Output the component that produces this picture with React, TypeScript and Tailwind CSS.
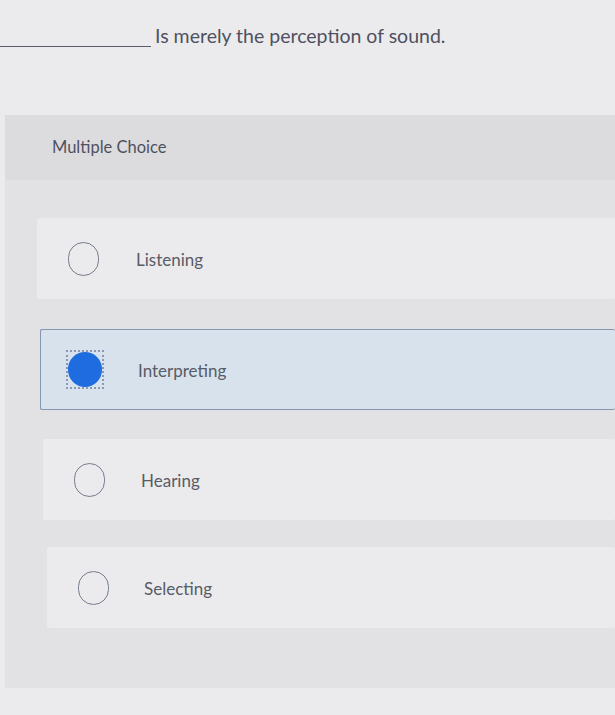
import React from "react";

const font = { fontFamily: "Lato, 'Open Sans', Arial, sans-serif" };

function Radio({ selected }: { selected?: boolean }) {
  if (selected) {
    return (
      <div className="w-[38px] h-[39px] border-[2px] border-dotted border-[#8a98b4] flex items-center justify-center shrink-0">
        <div className="w-[34px] h-[35px] rounded-full bg-[#1f6be0]" />
      </div>
    );
  }
  return <div className="w-[31px] h-[34px] rounded-full border-[1.5px] border-[#767c8e] shrink-0" />;
}

function Option({
  label,
  selected,
  ml,
  radioPl,
  textGap,
}: {
  label: string;
  selected?: boolean;
  ml: string;
  radioPl: string;
  textGap: string;
}) {
  return (
    <div
      className={
        "h-[81px] flex items-center rounded-[2px] " +
        ml +
        " " +
        (selected
          ? "bg-[#d7e2ec] border border-[#8596b3] border-r-0"
          : "bg-[#ebebed]")
      }
    >
      <div className={radioPl}>
        <Radio selected={selected} />
      </div>
      <div className={"text-[17px] text-[#595b66] pt-[3px] " + textGap}>{label}</div>
    </div>
  );
}

export default function App() {
  return (
    <div
      className="w-[615px] h-[715px] bg-[#ebebee] overflow-hidden flex flex-col"
      style={font}
    >
      <div className="h-[115px] pt-[23px] flex flex-col">
        <div className="flex items-end h-[26px]">
          <div className="w-[151px] border-b-[1.5px] border-[#5a5d6e] mb-[2px]" />
          <span className="ml-[4px] text-[19.5px] leading-[26px] text-[#4f5160]">
            Is merely the perception of sound.
          </span>
        </div>
      </div>
      <div className="ml-[5px] h-[573px] bg-[#e2e2e4] flex flex-col">
        <div className="h-[65px] bg-[#dcdcde] flex items-center pl-[47px]">
          <span className="text-[16.5px] text-[#4f5160]">Multiple Choice</span>
        </div>
        <div className="flex flex-col pt-[38px]">
          <Option label="Listening" ml="ml-[32px]" radioPl="pl-[31px]" textGap="ml-[37px]" />
          <div className="h-[30px]" />
          <Option
            label="Interpreting"
            selected
            ml="ml-[35px]"
            radioPl="pl-[25px]"
            textGap="ml-[34px]"
          />
          <div className="h-[29px]" />
          <Option label="Hearing" ml="ml-[38px]" radioPl="pl-[31px]" textGap="ml-[36px]" />
          <div className="h-[27px]" />
          <Option label="Selecting" ml="ml-[42px]" radioPl="pl-[31px]" textGap="ml-[35px]" />
        </div>
      </div>
    </div>
  );
}
